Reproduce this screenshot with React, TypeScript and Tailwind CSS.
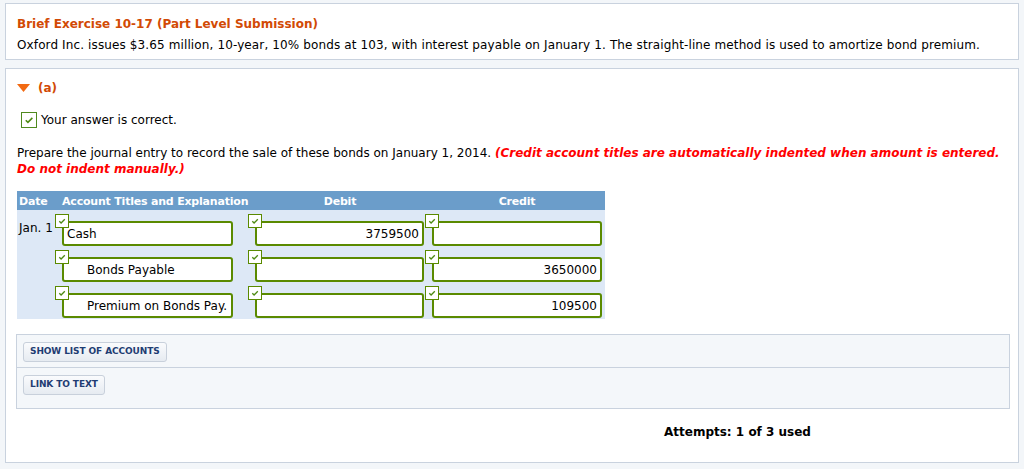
import React from "react";

interface Entry {
  date: string;
  account: string;
  indent: boolean;
  debit: string;
  credit: string;
}

const entries: Entry[] = [
  { date: "Jan. 1", account: "Cash", indent: false, debit: "3759500", credit: "" },
  { date: "", account: "Bonds Payable", indent: true, debit: "", credit: "3650000" },
  { date: "", account: "Premium on Bonds Pay.", indent: true, debit: "", credit: "109500" },
];

// small green tick used on every graded field
const Tick: React.FC<{ size: number }> = ({ size }) => (
  <svg width={size} height={size} viewBox="0 0 10 10" className="block">
    <path d="M2.3 5.2 L4.1 7 L7.8 3.2" fill="none" stroke="#4d8a12" strokeWidth="1.3" />
  </svg>
);

const Field: React.FC<{ value: string; align: "left" | "right"; indent?: boolean }> = ({
  value,
  align,
  indent,
}) => (
  <div className="relative pt-[4px]">
    <div className="absolute left-0 top-[4px] w-[14px] h-[14px] bg-white border border-[#5a8a00] flex items-center justify-center">
      <Tick size={10} />
    </div>
    <div
      className={`ml-[7px] mt-[7px] h-[25px] bg-white border-2 border-[#5a8a00] rounded-[3px] flex items-center overflow-hidden whitespace-nowrap ${
        align === "right" ? "justify-end pr-[3px]" : indent ? "pl-[23px]" : "pl-[3px]"
      }`}
    >
      {value}
    </div>
  </div>
);

const ToolButton: React.FC<{ label: string }> = ({ label }) => (
  <button className="h-[20px] px-[6px] rounded-[3px] border border-[#c8d0db] bg-gradient-to-b from-[#fafbfd] to-[#e6ebf1] text-[#1f3d73] font-bold text-[9px] tracking-[-0.1px]">
    {label}
  </button>
);

const App: React.FC = () => {
  return (
    <div className="min-h-screen bg-[#f3f6f9] pt-[3px] px-[5px] font-['DejaVu_Sans',sans-serif] text-[12px] text-black">
      {/* Exercise header */}
      <div className="bg-white border border-[#c9d2de] h-[57px] px-[11px] pt-[12px]">
        <div className="text-[#d24a05] font-bold leading-[16px]">Brief Exercise 10-17 (Part Level Submission)</div>
        <div className="leading-[16px] mt-[5px] tracking-[0.12px]">
          Oxford Inc. issues $3.65 million, 10-year, 10% bonds at 103, with interest payable on January 1. The
          straight-line method is used to amortize bond premium.
        </div>
      </div>

      {/* Part (a) */}
      <div className="mt-[8px] bg-white border border-[#c9d2de] h-[395px] px-[11px] pt-[11px]">
        <div className="flex items-center gap-[8px] h-[16px]">
          <svg width="13" height="8" viewBox="0 0 13 8" className="block">
            <path d="M0 0 H13 L6.5 8 Z" fill="#f26a12" />
          </svg>
          <span className="text-[#d24a05] font-bold">(a)</span>
        </div>

        <div className="flex items-center mt-[16px] ml-[4px] h-[16px]">
          <div className="w-[16px] h-[16px] border-[1.5px] border-[#4f8a1e] bg-white flex items-center justify-center">
            <Tick size={12} />
          </div>
          <span className="ml-[4px]">Your answer is correct.</span>
        </div>

        <p className="mt-[17px] leading-[16px]">
          Prepare the journal entry to record the sale of these bonds on January 1, 2014.{" "}
          <span className="text-[#f00] font-bold italic">
            (Credit account titles are automatically indented when amount is entered. Do not indent manually.)
          </span>
        </p>

        {/* Journal table */}
        <div className="mt-[14px] w-[588px]">
          <div className="grid grid-cols-[38px_193px_177px_180px] h-[19px] pt-[3px] bg-[#6b9dca] text-white font-bold text-[11px] leading-[16px] tracking-[-0.2px] whitespace-nowrap">
            <div className="pl-[2px]">Date</div>
            <div className="pl-[7px]">Account Titles and Explanation</div>
            <div className="pl-[7px] text-center">Debit</div>
            <div className="pl-[7px] pr-[3px] text-center">Credit</div>
          </div>
          <div className="bg-[#dde8f6] pb-[1px]">
            {entries.map((e, i) => (
              <div key={i} className="grid grid-cols-[38px_193px_177px_180px]">
                <div className="pl-[2px] pt-[10px] leading-[16px]">{e.date}</div>
                <div className="pr-[15px]">
                  <Field value={e.account} align="left" indent={e.indent} />
                </div>
                <div className="pr-[1px]">
                  <Field value={e.debit} align="right" />
                </div>
                <div className="pr-[3px]">
                  <Field value={e.credit} align="right" />
                </div>
              </div>
            ))}
          </div>
        </div>

        {/* Tools */}
        <div className="mt-[15px] w-[994px] -ml-[1px] bg-[#f4f7fa] border border-[#c9d2de]">
          <div className="h-[33px] px-[6px] pt-[6px] border-b border-[#c9d2de]">
            <ToolButton label="SHOW LIST OF ACCOUNTS" />
          </div>
          <div className="h-[40px] px-[6px] pt-[6px]">
            <ToolButton label="LINK TO TEXT" />
          </div>
        </div>

        <div className="mt-[15px] pl-[647px] font-bold leading-[16px]">Attempts: 1 of 3 used</div>
      </div>
    </div>
  );
};

export default App;
